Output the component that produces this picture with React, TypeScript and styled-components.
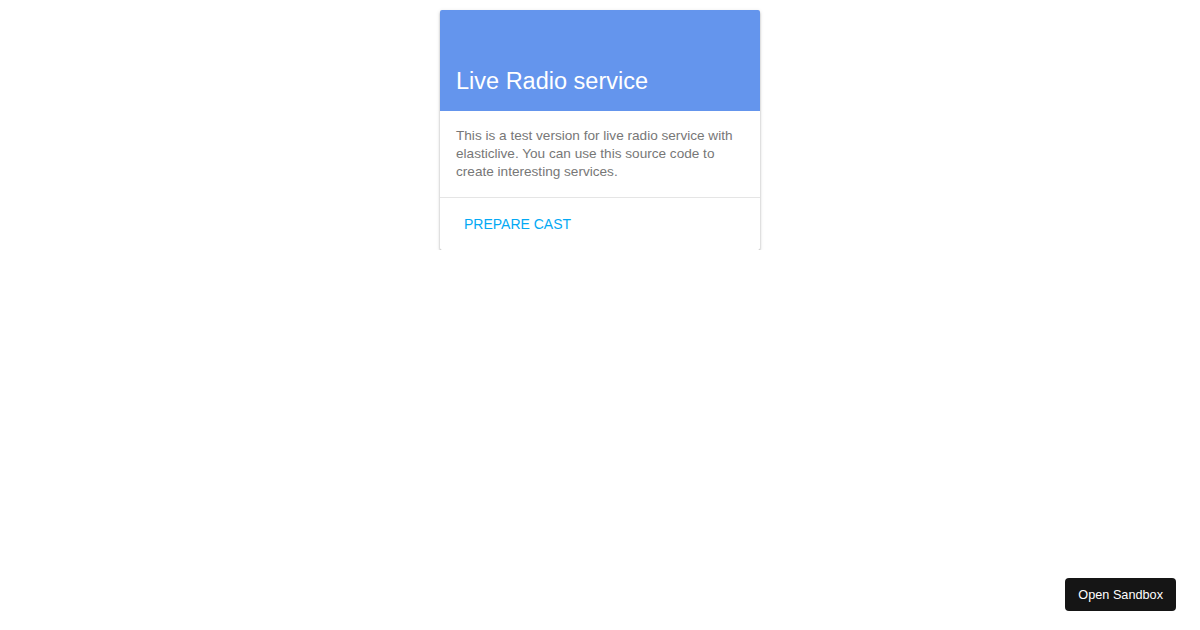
import React from 'react';
import styled, { createGlobalStyle } from 'styled-components';

const GlobalStyle = createGlobalStyle`
  html, body {
    margin: 0;
    padding: 0;
    background: #ffffff;
    font-family: 'Liberation Sans', Arial, sans-serif;
  }
`;

const Page = styled.div`
  display: flex;
  justify-content: center;
  padding-top: 10px;
`;

const Card = styled.div`
  width: 320px;
  background: #fff;
  border-radius: 2px;
  box-shadow: 0 2px 2px 0 rgba(0, 0, 0, 0.3), 0 1px 4px 0 rgba(0, 0, 0, 0.12);
`;

const CardHeader = styled.div`
  height: 101px;
  box-sizing: border-box;
  background: #6495ed;
  border-radius: 2px 2px 0 0;
  display: flex;
  align-items: flex-end;
  padding: 0 16px 14px;
`;

const CardTitle = styled.h2`
  margin: 0;
  font-size: 23.5px;
  font-weight: 400;
  line-height: 32px;
  color: #fff;
`;

const CardText = styled.div`
  padding: 16px;
  font-size: 13.6px;
  line-height: 18px;
  color: #777;
  border-bottom: 1px solid rgba(0, 0, 0, 0.1);
`;

const CardActions = styled.div`
  padding: 8px;
  display: flex;
`;

const FlatButton = styled.button`
  height: 36px;
  padding: 0 16px;
  border: none;
  background: transparent;
  border-radius: 2px;
  font-family: inherit;
  font-size: 14px;
  color: #03a9f4;
  text-transform: uppercase;
  cursor: pointer;
`;

const SandboxButton = styled.button`
  position: fixed;
  right: 24px;
  bottom: 19px;
  height: 33px;
  padding: 0 13px;
  border: none;
  border-radius: 4px;
  background: #151515;
  color: #fff;
  font-family: 'Liberation Sans', Arial, sans-serif;
  font-size: 12.7px;
`;

export default function App() {
  return (
    <>
      <GlobalStyle />
      <Page>
        <Card>
          <CardHeader>
            <CardTitle>Live Radio service</CardTitle>
          </CardHeader>
          <CardText>
            This is a test version for live radio service with elasticlive. You can use
            this source code to create interesting services.
          </CardText>
          <CardActions>
            <FlatButton>Prepare cast</FlatButton>
          </CardActions>
        </Card>
      </Page>
      <SandboxButton>Open Sandbox</SandboxButton>
    </>
  );
}
